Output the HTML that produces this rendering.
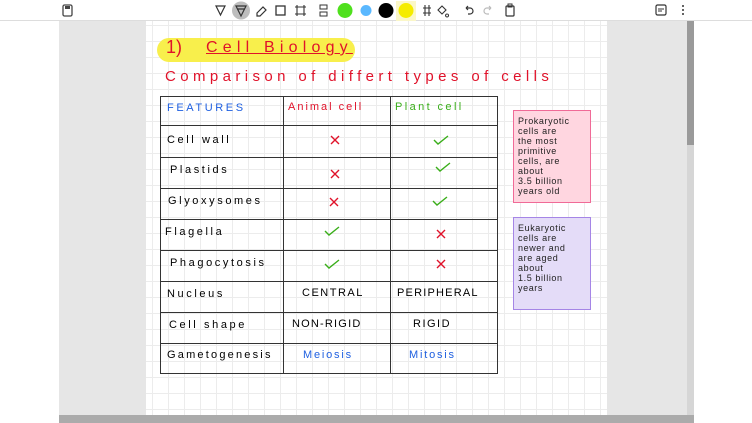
<!DOCTYPE html>
<html><head><meta charset="utf-8"><style>
*{margin:0;padding:0;box-sizing:border-box}
body{width:752px;height:423px;overflow:hidden;background:#fff;position:relative;font-family:"Liberation Sans",sans-serif}
.tb{position:absolute;left:0;top:0;width:752px;height:21px;background:#fff;border-bottom:1px solid #ddd}
.gray{position:absolute;left:59px;top:21px;width:628px;height:394px;background:#e6e6e6}
.page{position:absolute;left:146px;top:21px;width:461px;height:394px;background-color:#fff;
background-image:linear-gradient(#ececec 1px,transparent 1px),linear-gradient(90deg,#ececec 1px,transparent 1px);background-size:16px 16px;background-position:6px 4px}
.sb{position:absolute;left:687px;top:21px;width:7px;height:394px;background:#d6d6d6}
.thumb{position:absolute;left:687px;top:21px;width:7px;height:124px;background:#9a9a9a}
.bb{position:absolute;left:59px;top:415px;width:635px;height:8px;background:#ababab}
.t{position:absolute;font-size:11px;white-space:nowrap;letter-spacing:2.6px}
.hl{position:absolute;left:157px;top:38px;width:198px;height:24px;background:#f8ef4c;border-radius:12px}
table{position:absolute;left:160px;top:96px;border-collapse:collapse}
td{border:1.3px solid #333;padding:0}
.n1{position:absolute;left:513px;top:110px;width:78px;height:93px;background:#ffd6e0;border:1px solid #f06a97}
.n2{position:absolute;left:513px;top:217px;width:78px;height:93px;background:#e4dcf8;border:1px solid #a585e6}
.n1 div,.n2 div{font-size:9px;line-height:10px;padding:5px 4px;color:#222;letter-spacing:0.6px}
</style></head><body>
<div class="tb">
<svg width="752" height="21" viewBox="0 0 752 21">
<rect x="63" y="5" width="9" height="11" rx="1.5" fill="none" stroke="#444" stroke-width="1.3"/><rect x="65" y="6" width="5" height="3" fill="#444"/>
<path d="M216 6h9l-4.5 9z" fill="none" stroke="#333" stroke-width="1.2"/>
<circle cx="241" cy="10.5" r="9" fill="#bdbdbd"/><path d="M236 6h10l-5 10z M237 9h8" fill="none" stroke="#333" stroke-width="1.2"/>
<path d="M257 13l6-6 3 3-6 6h-3z" fill="none" stroke="#333" stroke-width="1.2"/>
<rect x="276" y="6" width="9" height="9" fill="none" stroke="#333" stroke-width="1.3"/>
<path d="M297 5v11M304 5v11M295 7h11M295 14h11" stroke="#333" stroke-width="1.1"/>
<rect x="320" y="5" width="7" height="4" fill="none" stroke="#333"/><rect x="320" y="12" width="7" height="4" fill="none" stroke="#333"/>
<circle cx="345" cy="10.5" r="7.5" fill="#4fe01d"/>
<circle cx="366" cy="10.5" r="5.5" fill="#5ab8ff"/>
<circle cx="386" cy="10.5" r="7.5" fill="#000"/>
<rect x="396" y="1" width="20" height="20" fill="#fbf7c8"/><circle cx="406" cy="10.5" r="7.5" fill="#f5ec00"/>
<path d="M425 5v11M429 5v11M423 8h8M423 13h8" stroke="#333" stroke-width="1.1"/>
<path d="M442 6l4 4-4 4-4-4z M447 14a1.5 1.5 0 1 0 .1 0" fill="none" stroke="#333" stroke-width="1.1"/>
<path d="M466 8h4a3 3 0 0 1 0 6h-2M466 8l2-2M466 8l2 2" fill="none" stroke="#333" stroke-width="1.2"/>
<path d="M491 8h-4a3 3 0 0 0 0 6h2M491 8l-2-2M491 8l-2 2" fill="none" stroke="#bbb" stroke-width="1.2"/>
<rect x="506" y="6" width="8" height="10" rx="1" fill="none" stroke="#333" stroke-width="1.2"/><rect x="508" y="4" width="4" height="3" fill="none" stroke="#333"/>
<rect x="656" y="5" width="10" height="10" rx="1.5" fill="none" stroke="#333" stroke-width="1.2"/><path d="M658 9h6M658 11h4" stroke="#333"/>
<circle cx="683" cy="6" r="1" fill="#333"/><circle cx="683" cy="10" r="1" fill="#333"/><circle cx="683" cy="14" r="1" fill="#333"/>
</svg></div>
<div class="gray"></div>
<div class="page"></div>
<div class="sb"></div><div class="thumb"></div>
<div class="bb"></div>
<div class="hl"></div>
<div class="t" style="left:166px;top:37px;font-size:18px;color:#e0122a;letter-spacing:0">1)</div>
<div class="t" style="left:206px;top:39px;font-size:16px;color:#e0122a;text-decoration:underline;letter-spacing:5.2px">Cell Biology</div>
<div class="t" style="left:165px;top:68px;font-size:15px;color:#e0122a;letter-spacing:4.4px">Comparison of&nbsp;differt types of cells</div>
<table>
<tr style="height:29px"><td style="width:123px"></td><td style="width:107px"></td><td style="width:107px"></td></tr>
<tr style="height:32px"><td></td><td></td><td></td></tr>
<tr style="height:31px"><td></td><td></td><td></td></tr>
<tr style="height:31px"><td></td><td></td><td></td></tr>
<tr style="height:31px"><td></td><td></td><td></td></tr>
<tr style="height:31px"><td></td><td></td><td></td></tr>
<tr style="height:31px"><td></td><td></td><td></td></tr>
<tr style="height:31px"><td></td><td></td><td></td></tr>
<tr style="height:30px"><td></td><td></td><td></td></tr>
</table>
<div class="t" style="left:167px;top:102px;color:#1e5fe0">FEATURES</div>
<div class="t" style="left:288px;top:101px;color:#e0122a;letter-spacing:2px">Animal cell</div>
<div class="t" style="left:395px;top:101px;color:#3aae1a;letter-spacing:2.4px">Plant cell</div>
<div class="t" style="left:167px;top:134px">Cell wall</div>
<div class="t" style="left:170px;top:164px">Plastids</div>
<div class="t" style="left:168px;top:195px">Glyoxysomes</div>
<div class="t" style="left:165px;top:226px">Flagella</div>
<div class="t" style="left:170px;top:257px">Phagocytosis</div>
<div class="t" style="left:167px;top:288px">Nucleus</div>
<div class="t" style="left:169px;top:319px">Cell shape</div>
<div class="t" style="left:167px;top:349px;letter-spacing:2.2px">Gametogenesis</div>
<div class="t" style="left:302px;top:287px;letter-spacing:1.5px">CENTRAL</div>
<div class="t" style="left:397px;top:287px;letter-spacing:1.2px">PERIPHERAL</div>
<div class="t" style="left:292px;top:318px;letter-spacing:1.2px">NON-RIGID</div>
<div class="t" style="left:413px;top:318px;letter-spacing:1.5px">RIGID</div>
<div class="t" style="left:303px;top:349px;color:#1e5fe0;letter-spacing:1.8px">Meiosis</div>
<div class="t" style="left:409px;top:349px;color:#1e5fe0;letter-spacing:1.8px">Mitosis</div>
<svg style="position:absolute;left:0;top:0" width="752" height="423">
<g stroke="#e0122a" stroke-width="1.4" fill="none">
<path d="M331 136l8 8M339 136l-8 8"/><path d="M331 170l8 8M339 170l-8 8"/><path d="M330 198l8 8M338 198l-8 8"/>
<path d="M437 230l8 8M445 230l-8 8"/><path d="M437 260l8 8M445 260l-8 8"/>
</g>
<g stroke="#3aae1a" stroke-width="1.4" fill="none">
<path d="M434 140l4 4 10-8"/><path d="M436 167l4 4 10-8"/><path d="M433 201l4 4 10-8"/>
<path d="M325 231l4 4 10-8"/><path d="M325 264l4 4 10-8"/>
</g>
</svg>
<div class="n1"><div>Prokaryotic<br>cells are<br>the most<br>primitive<br>cells, are<br>about<br>3.5 billion<br>years old</div></div>
<div class="n2"><div>Eukaryotic<br>cells are<br>newer and<br>are aged<br>about<br>1.5 billion<br>years</div></div>
</body></html>
